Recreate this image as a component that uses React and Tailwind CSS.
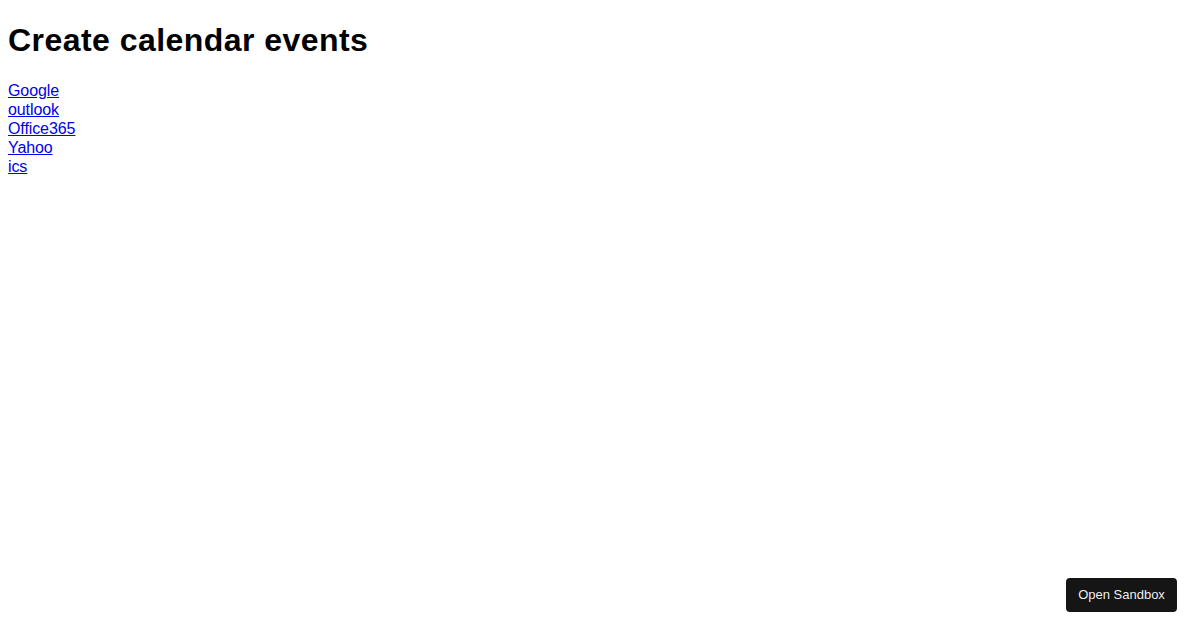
export default function App() {
  const links = ['Google', 'outlook', 'Office365', 'Yahoo', 'ics']

  return (
    <div className="min-h-screen bg-white px-2 pt-[22px] font-['Liberation_Sans',Arial,sans-serif] text-black">
      <h1 className="text-[32px] leading-[37px] font-bold tracking-[0.45px]">Create calendar events</h1>

      <div className="mt-[22px] flex flex-col items-start text-base leading-[19px] tracking-[-0.1px]">
        {links.map((name) => (
          <a key={name} href="#" className="text-[#0000ee] underline">
            {name}
          </a>
        ))}
      </div>

      <button className="fixed right-[23px] bottom-[18px] h-[34px] w-[111px] rounded-[4px] bg-[#151515] text-[13px] text-white/95 font-['Liberation_Sans',Arial,sans-serif]">
        Open Sandbox
      </button>
    </div>
  )
}
